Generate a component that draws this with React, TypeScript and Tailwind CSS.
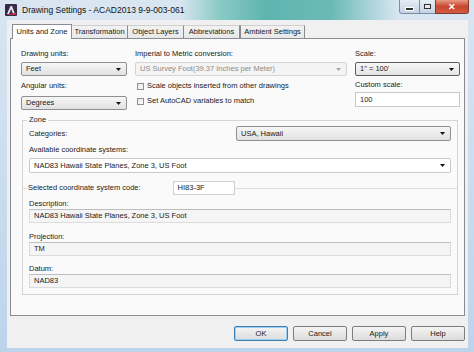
import React from "react";

const Arrow = ({ color = "#111" }: { color?: string }) => (
  <svg width="5" height="3" viewBox="0 0 5 3" className="shrink-0">
    <path d="M0 0h5L2.5 3z" fill={color} />
  </svg>
);

type ComboVariant = "btn" | "white" | "disabled" | "dark";

function Combo({
  text,
  className = "",
  variant = "btn",
}: {
  text: string;
  className?: string;
  variant?: ComboVariant;
}) {
  const styles: Record<ComboVariant, string> = {
    btn: "border-[#8f9091] bg-[linear-gradient(180deg,#f6f6f6,#e1e1e1)] text-[#1a1a1a]",
    dark: "border-[#5e5e5e] bg-[linear-gradient(180deg,#f7f7f7,#e4e4e4)] text-[#1a1a1a]",
    white: "border-[#c9c9c9] bg-white text-[#1a1a1a]",
    disabled: "border-[#d4d4d4] bg-[#f4f4f4] text-[#8c8c8c]",
  };
  return (
    <div
      className={`flex h-[14px] items-center justify-between rounded-[2px] border pl-[4px] pr-[5px] ${styles[variant]} ${className}`}
    >
      <span className="truncate">{text}</span>
      <Arrow color={variant === "disabled" ? "#a8a8a8" : "#111"} />
    </div>
  );
}

function Check({ label }: { label: string }) {
  return (
    <div className="flex h-[10px] items-center gap-[3px] pl-[2px]">
      <div className="h-[7px] w-[7px] border border-[#8e8f8f] bg-[linear-gradient(135deg,#e6e6e6,#fbfbfb)]" />
      <span>{label}</span>
    </div>
  );
}

function ReadBox({ text }: { text: string }) {
  return (
    <div className="flex h-[14px] items-center border border-[#dcdcdc] border-t-[#bdbdbd] bg-[#f5f5f5] pl-[4px] text-[#1a1a1a]">
      {text}
    </div>
  );
}

function Button({ text, def = false }: { text: string; def?: boolean }) {
  return (
    <div
      className={`flex h-[15px] w-[54px] items-center justify-center rounded-[2px] border bg-[linear-gradient(180deg,#f4f4f4,#dcdcdc)] text-[#1a1a1a] ${
        def ? "border-[#3d7fb3] shadow-[inset_0_0_0_1px_#9fd0f0]" : "border-[#7d7d7d]"
      }`}
    >
      {text}
    </div>
  );
}

function Tab({ text, w, selected = false }: { text: string; w: string; selected?: boolean }) {
  if (selected) {
    return (
      <div
        className={`relative z-10 -mb-[1px] flex h-[15px] items-center justify-center border border-b-0 border-[#898c95] bg-white ${w}`}
      >
        {text}
      </div>
    );
  }
  return (
    <div
      className={`flex h-[13px] items-center justify-center border-r border-t border-r-[#8a8a8a] border-t-[#cfcfcf] bg-[linear-gradient(180deg,#f2f2f2,#e8e8e8)] ${w}`}
    >
      {text}
    </div>
  );
}

export default function App() {
  return (
    <div className="flex h-[352px] w-[474px] flex-col overflow-hidden bg-[linear-gradient(180deg,#d9e6f2,#bcd4eb)] font-['Liberation_Sans',Arial,sans-serif] text-[7.5px] leading-[10px] text-[#1a1a1a]">
      {/* Title bar */}
      <div className="flex h-[20px] shrink-0 items-center bg-[linear-gradient(90deg,rgba(0,0,0,0)_0%,rgba(0,0,0,0)_38%,#8ccbc6_46%,#5fb4b0_56%,#6cbab7_70%,rgba(120,190,190,0)_84%)]">
        <svg width="12" height="12" viewBox="0 0 12 12" className="ml-[5px] shrink-0">
          <rect x="0" y="0" width="12" height="12" rx="1" fill="#3a2a4a" />
          <path d="M2 10 L5.5 2 L7 2 L10 10 L8 10 L6.2 5 L4 10 Z" fill="#e6e6f0" />
          <path d="M1 11 L11 11 L11 9 L9 9 Z" fill="#c0303a" />
        </svg>
        <span className="ml-[5px] text-[8.5px] text-[#111]">Drawing Settings - ACAD2013 9-9-003-061</span>
        <div className="ml-auto mr-[5px] flex h-[14px] self-start">
          <div className="flex w-[21px] items-center justify-center rounded-bl-[3px] border border-t-0 border-[#7b8ea3] bg-[linear-gradient(180deg,#e6edf5,#c4d3e3)]">
            <div className="mt-[4px] h-[2px] w-[7px] bg-[#333] shadow-[0_0_0_1px_#fff]" />
          </div>
          <div className="flex w-[15px] items-center justify-center border-b border-[#7b8ea3] bg-[linear-gradient(180deg,#e6edf5,#c4d3e3)]">
            <div className="h-[5px] w-[7px] border border-[#333] bg-[#e8e8e8]" />
          </div>
          <div className="flex w-[34px] items-center justify-center rounded-br-[3px] border border-t-0 border-[#7b3b32] bg-[linear-gradient(180deg,#e79a84,#c9452f_50%,#d55b3f)]">
            <span className="text-[9px] font-bold leading-[10px] text-white">✕</span>
          </div>
        </div>
      </div>

      {/* Body */}
      <div className="mb-[4px] ml-[7px] mr-[6px] flex flex-1 flex-col bg-[#f0f0f0]">
        {/* Tabs */}
        <div className="ml-[5px] mt-[4px] flex items-end">
          <Tab text="Units and Zone" w="w-[60px]" selected />
          <Tab text="Transformation" w="w-[56px]" />
          <Tab text="Object Layers" w="w-[56px]" />
          <Tab text="Abbreviations" w="w-[56px]" />
          <Tab text="Ambient Settings" w="w-[65px] border-l border-l-[#8a8a8a]" />
        </div>

        {/* Panel */}
        <div className="ml-[3px] mr-[3px] flex h-[278px] flex-col border border-[#898c95] bg-[#fafafa] pl-[10px] pr-[4px] pt-[10px]">
          {/* Top grid */}
          <div className="flex">
            <div className="flex w-[106px] flex-col">
              <div>Drawing units:</div>
              <Combo text="Feet" className="mt-[3px]" />
              <div className="mt-[5px]">Angular units:</div>
              <Combo text="Degrees" className="mt-[5px]" />
            </div>
            <div className="ml-[8px] flex w-[212px] flex-col">
              <div>Imperial to Metric conversion:</div>
              <Combo text="US Survey Foot(39.37 Inches per Meter)" variant="disabled" className="mt-[3px]" />
              <div className="mt-[5px]">
                <Check label="Scale objects inserted from other drawings" />
              </div>
              <div className="mt-[5px]">
                <Check label="Set AutoCAD variables to match" />
              </div>
            </div>
            <div className="ml-[8px] flex w-[105px] flex-col">
              <div>Scale:</div>
              <Combo text={"1\" = 100'"} variant="dark" className="mt-[3px]" />
              <div className="mt-[4px]">Custom scale:</div>
              <div className="mt-[2px] flex h-[15px] items-center border border-[#c9c9c9] bg-white pl-[4px]">100</div>
            </div>
          </div>

          {/* Zone group */}
          <div className="relative ml-[1px] mr-[2px] mt-[10px] flex flex-col border border-[#d5d5d5] px-[6px] pb-[6px]">
            <div className="absolute -top-[6px] left-[4px] bg-[#fafafa] px-[2px]">Zone</div>
            <div className="mt-[5px] flex items-center justify-between">
              <span>Categories:</span>
              <Combo text="USA, Hawaii" className="h-[15px] w-[215px]" />
            </div>
            <div className="mt-[4px]">Available coordinate systems:</div>
            <Combo text="NAD83 Hawaii State Planes, Zone 3, US Foot" variant="white" className="mt-[3px] h-[15px]" />

            <div className="-ml-[6px] -mr-[6px] mt-[8px] flex items-center">
              <div className="h-px w-[4px] bg-[#dedede]" />
              <span className="ml-[1px]">Selected coordinate system code:</span>
              <div className="ml-[32px] flex h-[14px] w-[62px] items-center border border-[#cfcfcf] bg-white pl-[4px]">HI83-3F</div>
              <div className="h-px flex-1 bg-[#dedede]" />
            </div>

            <div className="mt-[4px]">Description:</div>
            <ReadBox text="NAD83 Hawaii State Planes, Zone 3, US Foot" />
            <div className="mt-[9px]">Projection:</div>
            <ReadBox text="TM" />
            <div className="mt-[8px]">Datum:</div>
            <ReadBox text="NAD83" />
          </div>
        </div>

        {/* Buttons */}
        <div className="mr-[3px] mt-[10px] flex justify-end gap-[5px]">
          <Button text="OK" def />
          <Button text="Cancel" />
          <Button text="Apply" />
          <Button text="Help" />
        </div>
      </div>
    </div>
  );
}
